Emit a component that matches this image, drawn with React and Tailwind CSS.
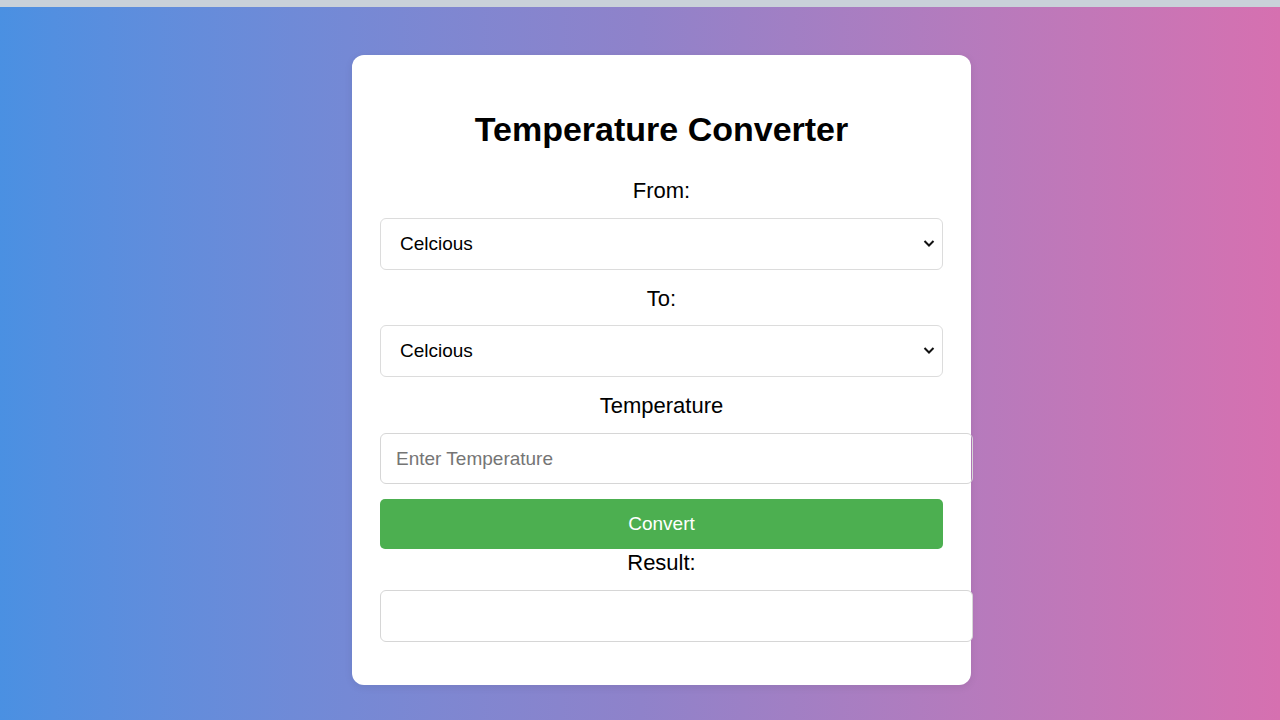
export default function App() {
  const font = { fontFamily: '"Liberation Sans", Arial, sans-serif' };
  return (
    <div className="w-[1280px] h-[720px] overflow-hidden flex flex-col" style={font}>
      <div className="h-[7px] bg-[#c9d1d9] shrink-0" />
      <div className="flex-1 bg-gradient-to-r from-[#4a90e2] via-[#8f82ca] to-[#d670b0] pl-[352px] pt-[48px]">
        <div className="w-[619px] h-[630px] bg-white rounded-[12px] shadow-[0_2px_8px_rgba(0,0,0,0.08)] px-[28px] pt-[55px] flex flex-col">
          <h1 className="text-[34px] leading-[39px] font-bold text-black text-center">Temperature Converter</h1>
          <label className="mt-[29px] text-[22px] leading-[25px] text-black text-center">From:</label>
          <div className="relative mt-[15px] h-[52px] shrink-0">
            <select className="appearance-none w-full h-full border border-[#dcdcdc] rounded-[6px] bg-white pl-[19px] text-[19px] text-black outline-none" style={font}>
              <option>Celcious</option>
              <option>Fahrenheit</option>
              <option>Kelvin</option>
            </select>
            <svg className="absolute right-[8px] top-[21px] pointer-events-none" width="12" height="9" viewBox="0 0 12 9">
              <path d="M1.5 2 L6 6.5 L10.5 2" fill="none" stroke="#111" strokeWidth="2" />
            </svg>
          </div>
          <label className="mt-[16px] text-[22px] leading-[25px] text-black text-center">To:</label>
          <div className="relative mt-[14px] h-[52px] shrink-0">
            <select className="appearance-none w-full h-full border border-[#dcdcdc] rounded-[6px] bg-white pl-[19px] text-[19px] text-black outline-none" style={font}>
              <option>Celcious</option>
              <option>Fahrenheit</option>
              <option>Kelvin</option>
            </select>
            <svg className="absolute right-[8px] top-[21px] pointer-events-none" width="12" height="9" viewBox="0 0 12 9">
              <path d="M1.5 2 L6 6.5 L10.5 2" fill="none" stroke="#111" strokeWidth="2" />
            </svg>
          </div>
          <label className="mt-[16px] text-[22px] leading-[25px] text-black text-center">Temperature</label>
          <input
            className="mt-[15px] w-[593px] h-[51px] shrink-0 border border-[#d6d6d6] rounded-[6px] px-[15px] text-[19px] text-black placeholder:text-[#757575] outline-none"
            placeholder="Enter Temperature"
            style={font}
          />
          <button className="mt-[15px] h-[50px] w-full shrink-0 bg-[#4caf50] rounded-[5px] text-white text-[19px]" style={font}>Convert</button>
          <label className="mt-[1px] text-[22px] leading-[25px] text-black text-center">Result:</label>
          <div className="mt-[15px] w-[593px] h-[52px] shrink-0 border border-[#d6d6d6] rounded-[6px] bg-white" />
        </div>
      </div>
    </div>
  );
}
